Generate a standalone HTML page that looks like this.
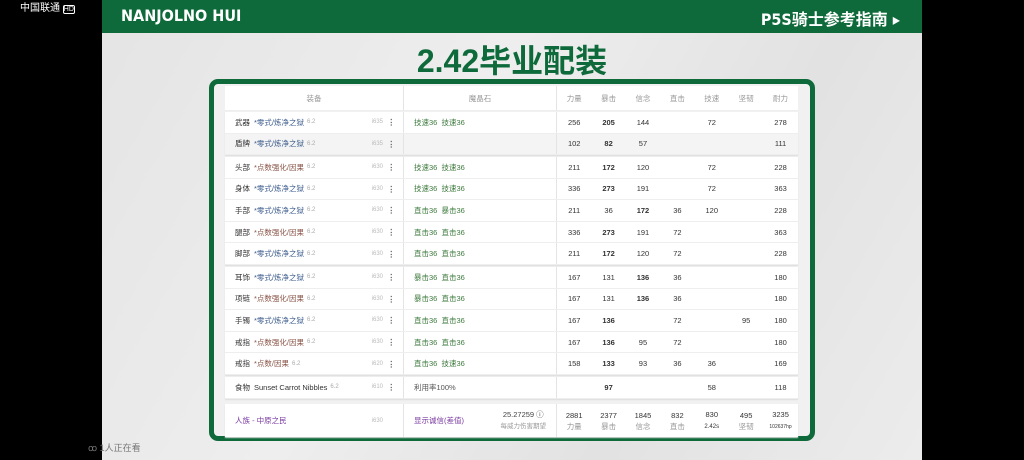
<!DOCTYPE html>
<html><head><meta charset="utf-8"><style>
*{margin:0;padding:0;box-sizing:border-box}
body{width:1024px;height:460px;background:#000;position:relative;overflow:hidden;font-family:"Liberation Sans","Noto Sans CJK SC",sans-serif}
.main{position:absolute;left:102px;top:0;width:820px;height:460px;background:linear-gradient(120deg,#e4e4e4,#eeeeee 40%,#e2e2e2 70%,#ececec)}
.hdr{position:absolute;left:102px;top:0;width:820px;height:33px;background:#0e6a3a;color:#fff;font-weight:bold;font-family:"DejaVu Sans Condensed","Noto Sans CJK SC",sans-serif}
.title{position:absolute;left:0;width:1024px;top:36px;text-align:center;font-size:32px;font-weight:bold;color:#0e6a3a}
.panel{position:absolute;left:209px;top:79px;width:606px;height:362px;border:5px solid #0e6a3a;border-radius:9px;background:#f1f1f1}
.grp{position:absolute;left:225px;width:573px;background:#fff;box-shadow:0 1px 1px #ddd}
.row{display:flex;height:21.6px;align-items:center;font-size:7.5px;color:#333;border-bottom:1px solid #eee}
.n{width:179px;padding-left:10px;border-right:1px solid #e4e4e4;height:100%;display:flex;align-items:center;position:relative}
.m{width:153px;padding-left:10px;border-right:1px solid #e4e4e4;height:100%;display:flex;align-items:center;color:#3d7a3d}
.s{width:34.4px;text-align:center}
.b{font-weight:bold}
.bl{color:#3b5b8c;margin-left:4px}.br{color:#8a5548;margin-left:4px}
.v{color:#aaa;font-size:6px;margin-left:3px}
.il{position:absolute;right:20px;top:50%;transform:translateY(-50%);color:#bbb;font-size:6px}
.dt{position:absolute;right:8px;top:50%;transform:translateY(-50%);color:#555;font-weight:bold}
.hd{color:#999}
</style></head><body>
<div class="main"></div>
<div class="hdr"><span style="position:absolute;left:19px;top:6px;font-size:16px">NANJOLNO HUI</span><span style="position:absolute;right:22px;top:6px;font-size:16px">P5S骑士参考指南 ▸</span></div>
<div style="position:absolute;left:20px;top:-1px;color:#fff;font-size:10px">中国联通 <span style="border:1px solid #fff;font-size:7px;border-radius:2px">HD</span></div>
<div class="title">2.42毕业配装</div>
<div class="panel"></div>
<div class="grp" style="top:86px;box-shadow:none">
<div class="row hd" style="height:25px"><div class="n" style="justify-content:center;padding:0">装备</div><div class="m" style="justify-content:center;padding:0;color:#999">魔晶石</div><div class="s">力量</div><div class="s">暴击</div><div class="s">信念</div><div class="s">直击</div><div class="s">技速</div><div class="s">坚韧</div><div class="s">耐力</div></div></div>
<div class="grp" style="top:112px">
<div class="row"><div class="n">武器<span class="bl">*零式/炼净之狱</span><span class="v">6.2</span><span class="il">i635</span><span class="dt">⋮</span></div><div class="m">技速36&nbsp;&nbsp;技速36</div><div class="s">256</div><div class="s b">205</div><div class="s">144</div><div class="s"></div><div class="s">72</div><div class="s"></div><div class="s">278</div></div>
<div class="row" style="background:#f4f4f4"><div class="n">盾牌<span class="bl">*零式/炼净之狱</span><span class="v">6.2</span><span class="il">i635</span><span class="dt">⋮</span></div><div class="m"></div><div class="s">102</div><div class="s b">82</div><div class="s">57</div><div class="s"></div><div class="s"></div><div class="s"></div><div class="s">111</div></div>
</div>
<div class="grp" style="top:157px">
<div class="row"><div class="n">头部<span class="br">*点数强化/因果</span><span class="v">6.2</span><span class="il">i630</span><span class="dt">⋮</span></div><div class="m">技速36&nbsp;&nbsp;技速36</div><div class="s">211</div><div class="s b">172</div><div class="s">120</div><div class="s"></div><div class="s">72</div><div class="s"></div><div class="s">228</div></div>
<div class="row"><div class="n">身体<span class="bl">*零式/炼净之狱</span><span class="v">6.2</span><span class="il">i630</span><span class="dt">⋮</span></div><div class="m">技速36&nbsp;&nbsp;技速36</div><div class="s">336</div><div class="s b">273</div><div class="s">191</div><div class="s"></div><div class="s">72</div><div class="s"></div><div class="s">363</div></div>
<div class="row"><div class="n">手部<span class="bl">*零式/炼净之狱</span><span class="v">6.2</span><span class="il">i630</span><span class="dt">⋮</span></div><div class="m">直击36&nbsp;&nbsp;暴击36</div><div class="s">211</div><div class="s">36</div><div class="s b">172</div><div class="s">36</div><div class="s">120</div><div class="s"></div><div class="s">228</div></div>
<div class="row"><div class="n">腿部<span class="br">*点数强化/因果</span><span class="v">6.2</span><span class="il">i630</span><span class="dt">⋮</span></div><div class="m">直击36&nbsp;&nbsp;直击36</div><div class="s">336</div><div class="s b">273</div><div class="s">191</div><div class="s">72</div><div class="s"></div><div class="s"></div><div class="s">363</div></div>
<div class="row"><div class="n">脚部<span class="bl">*零式/炼净之狱</span><span class="v">6.2</span><span class="il">i630</span><span class="dt">⋮</span></div><div class="m">直击36&nbsp;&nbsp;直击36</div><div class="s">211</div><div class="s b">172</div><div class="s">120</div><div class="s">72</div><div class="s"></div><div class="s"></div><div class="s">228</div></div>
</div>
<div class="grp" style="top:267px">
<div class="row"><div class="n">耳饰<span class="bl">*零式/炼净之狱</span><span class="v">6.2</span><span class="il">i630</span><span class="dt">⋮</span></div><div class="m">暴击36&nbsp;&nbsp;直击36</div><div class="s">167</div><div class="s">131</div><div class="s b">136</div><div class="s">36</div><div class="s"></div><div class="s"></div><div class="s">180</div></div>
<div class="row"><div class="n">项链<span class="br">*点数强化/因果</span><span class="v">6.2</span><span class="il">i630</span><span class="dt">⋮</span></div><div class="m">暴击36&nbsp;&nbsp;直击36</div><div class="s">167</div><div class="s">131</div><div class="s b">136</div><div class="s">36</div><div class="s"></div><div class="s"></div><div class="s">180</div></div>
<div class="row"><div class="n">手镯<span class="bl">*零式/炼净之狱</span><span class="v">6.2</span><span class="il">i630</span><span class="dt">⋮</span></div><div class="m">直击36&nbsp;&nbsp;直击36</div><div class="s">167</div><div class="s b">136</div><div class="s"></div><div class="s">72</div><div class="s"></div><div class="s">95</div><div class="s">180</div></div>
<div class="row"><div class="n">戒指<span class="br">*点数强化/因果</span><span class="v">6.2</span><span class="il">i630</span><span class="dt">⋮</span></div><div class="m">直击36&nbsp;&nbsp;直击36</div><div class="s">167</div><div class="s b">136</div><div class="s">95</div><div class="s">72</div><div class="s"></div><div class="s"></div><div class="s">180</div></div>
<div class="row"><div class="n">戒指<span class="br">*点数/因果</span><span class="v">6.2</span><span class="il">i620</span><span class="dt">⋮</span></div><div class="m">直击36&nbsp;&nbsp;技速36</div><div class="s">158</div><div class="s b">133</div><div class="s">93</div><div class="s">36</div><div class="s">36</div><div class="s"></div><div class="s">169</div></div>
</div>
<div class="grp" style="top:377px">
<div class="row"><div class="n">食物<span style="margin-left:4px">Sunset Carrot Nibbles</span><span class="v">6.2</span><span class="il">i610</span><span class="dt">⋮</span></div><div class="m" style="color:#555">利用率100%</div><div class="s"></div><div class="s b">97</div><div class="s"></div><div class="s"></div><div class="s">58</div><div class="s"></div><div class="s">118</div></div>
</div>
<div class="grp" style="top:404px;height:33px">
<div class="row" style="height:33px;border:none"><div class="n" style="color:#7a3aa0">人族 - 中原之民<span class="il">i630</span></div><div class="m" style="color:#7a3aa0;position:relative">显示诚信(差值)<span style="position:absolute;right:10px;top:5px;text-align:center;color:#444;font-size:7.5px;line-height:11px">25.27259 ⓘ<br><span style="color:#999;font-size:6.5px">每威力伤害期望</span></span></div>
<div class="s" style="line-height:11px">2881<br><span style="color:#999">力量</span></div><div class="s" style="line-height:11px">2377<br><span style="color:#999">暴击</span></div><div class="s" style="line-height:11px">1845<br><span style="color:#999">信念</span></div><div class="s" style="line-height:11px">832<br><span style="color:#999">直击</span></div><div class="s" style="line-height:11px">830<br><span style="font-size:6px">2.42s</span></div><div class="s" style="line-height:11px">495<br><span style="color:#999">坚韧</span></div><div class="s" style="line-height:11px">3235<br><span style="font-size:5px">102637hp</span></div></div>
</div>
<div style="position:absolute;left:88px;top:441px;color:#777;font-size:9px">ꝏ 1人正在看</div>
</body></html>
